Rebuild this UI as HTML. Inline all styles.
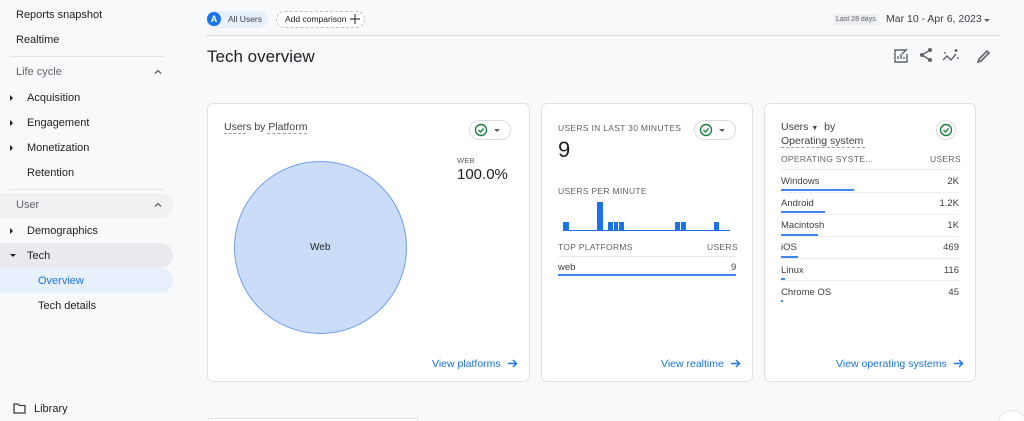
<!DOCTYPE html>
<html><head><meta charset="utf-8"><style>
*{margin:0;padding:0;box-sizing:border-box}
html,body{width:1024px;height:421px;overflow:hidden}
body{background:#f8f9fb;font-family:"Liberation Sans",Arial,sans-serif;color:#202124;position:relative}
.a{position:absolute;white-space:nowrap}
.nav{font-size:11px;color:#202124}
.sec{font-size:11px;color:#5f6368}
.card{position:absolute;background:#fff;border:1px solid #dfe1e5;border-radius:6px}
.cap{font-size:8.5px;letter-spacing:.3px;color:#5f6368}
.link{font-size:10.5px;color:#1a73e8}
.chip{position:absolute;border:1px solid #dadce0;border-radius:12px;background:#fff}
.row{position:absolute;left:16px;width:178px;font-size:9.5px;color:#3c4043}
.row span{position:absolute;right:0}
</style></head><body>
<!-- sidebar -->
<div class="a nav" style="left:16px;top:9px">Reports snapshot</div>
<div class="a nav" style="left:16px;top:34px">Realtime</div>
<div class="a" style="left:10px;top:56px;width:154px;height:1px;background:#e3e3e3"></div>
<div class="a sec" style="left:16px;top:66px">Life cycle</div>
<svg class="a" style="left:154px;top:69px" width="8" height="5" viewBox="0 0 8 5"><path d="M1 4.5L4 1.5 7 4.5" fill="none" stroke="#5f6368" stroke-width="1.3"/></svg>
<div class="a" style="left:10px;top:95px;border-top:3px solid transparent;border-bottom:3px solid transparent;border-left:3px solid #202124"></div>
<div class="a nav" style="left:27px;top:92px">Acquisition</div>
<div class="a" style="left:10px;top:120px;border-top:3px solid transparent;border-bottom:3px solid transparent;border-left:3px solid #202124"></div>
<div class="a nav" style="left:27px;top:117px">Engagement</div>
<div class="a" style="left:10px;top:145px;border-top:3px solid transparent;border-bottom:3px solid transparent;border-left:3px solid #202124"></div>
<div class="a nav" style="left:27px;top:142px">Monetization</div>
<div class="a nav" style="left:27px;top:167px">Retention</div>
<div class="a" style="left:10px;top:189px;width:154px;height:1px;background:#e3e3e3"></div>
<div class="a" style="left:0;top:193px;width:173px;height:25px;background:#f0f1f3;border-radius:0 13px 13px 0"></div>
<div class="a sec" style="left:16px;top:199px">User</div>
<svg class="a" style="left:154px;top:202px" width="8" height="5" viewBox="0 0 8 5"><path d="M1 4.5L4 1.5 7 4.5" fill="none" stroke="#5f6368" stroke-width="1.3"/></svg>
<div class="a" style="left:10px;top:228px;border-top:3px solid transparent;border-bottom:3px solid transparent;border-left:3px solid #202124"></div>
<div class="a nav" style="left:27px;top:225px">Demographics</div>
<div class="a" style="left:0;top:243px;width:173px;height:25px;background:#e8eaed;border-radius:0 13px 13px 0"></div>
<div class="a" style="left:10px;top:254px;width:0;height:0;border-left:3px solid transparent;border-right:3px solid transparent;border-top:3px solid #202124"></div>
<div class="a nav" style="left:27px;top:250px">Tech</div>
<div class="a" style="left:0;top:268px;width:173px;height:25px;background:#e8f0fe;border-radius:0 13px 13px 0"></div>
<div class="a nav" style="left:38px;top:275px;color:#1a73e8">Overview</div>
<div class="a nav" style="left:38px;top:300px">Tech details</div>
<svg class="a" style="left:13px;top:403px" width="13" height="11" viewBox="0 0 13 11"><path d="M1 1h4l1.5 1.5H12v7.5H1z" fill="none" stroke="#3c4043" stroke-width="1.3"/></svg>
<div class="a nav" style="left:34px;top:403px">Library</div>
<!-- top bar -->
<div class="a" style="left:206px;top:11px;width:62px;height:17px;background:#e8f0fe;border-radius:9px"></div>
<div class="a" style="left:207px;top:12px;width:14px;height:14px;border-radius:7px;background:#1a73e8;color:#fff;font-size:9px;text-align:center;line-height:14px;font-weight:bold">A</div>
<div class="a" style="left:228px;top:14px;font-size:8.5px;color:#3c4043">All Users</div>
<div class="a" style="left:276px;top:11px;width:89px;height:17px;border:1px dashed #bdc1c6;border-radius:9px;background:#fff"></div>
<div class="a" style="left:285px;top:14px;font-size:8.5px;color:#202124">Add comparison</div>
<svg class="a" style="left:350px;top:14px" width="10" height="10" viewBox="0 0 10 10"><path d="M5 0v10M0 5h10" stroke="#3c4043" stroke-width="1.2"/></svg>
<div class="a" style="left:206px;top:35px;width:794px;height:1px;background:#dadce0"></div>
<div class="a" style="left:834px;top:14px;font-size:7px;color:#5f6368;background:#eceef0;padding:2px 2px">Last 28 days</div>
<div class="a" style="left:886px;top:13px;font-size:10.5px;color:#3c4043">Mar 10 - Apr 6, 2023</div>
<div class="a" style="left:984px;top:19px;border-left:3px solid transparent;border-right:3px solid transparent;border-top:3px solid #5f6368"></div>
<div class="a" style="left:207px;top:47px;font-size:17px;color:#202124">Tech overview</div>
<svg class="a" style="left:893px;top:48px" width="16" height="16" viewBox="0 0 16 16" fill="none" stroke="#5f6368" stroke-width="1.4"><path d="M12 2H2v12h12V6"/><path d="M5 11V8M8 11V6M11 11V9"/><path d="M9 6l5-5"/></svg>
<svg class="a" style="left:918px;top:47px" width="16" height="16" viewBox="0 0 16 16"><g fill="none" stroke="#5f6368" stroke-width="1.4"><path d="M12 3L4 8l8 5"/></g><circle cx="12" cy="3" r="2" fill="#5f6368"/><circle cx="4" cy="8" r="2" fill="#5f6368"/><circle cx="12" cy="13" r="2" fill="#5f6368"/></svg>
<svg class="a" style="left:942px;top:48px" width="18" height="16" viewBox="0 0 18 16" fill="none" stroke="#5f6368" stroke-width="1.4"><path d="M1 12l4-4 4 4 5-6"/><path d="M14 1v3M12.5 2.5h3M3 4v2M16 9v2"/></svg>
<svg class="a" style="left:976px;top:48px" width="14" height="16" viewBox="0 0 14 16" fill="none" stroke="#5f6368" stroke-width="1.6"><path d="M2 14l1-3 8-8 2 2-8 8z"/></svg>
<!-- card 1 -->
<div class="card" style="left:207px;top:103px;width:323px;height:279px"></div>
<div class="a" style="left:224px;top:121px;font-size:10.5px;color:#3c4043">Users by Platform</div>
<div class="a" style="left:224px;top:133px;width:22px;border-top:1px dashed #9aa0a6"></div>
<div class="a" style="left:267px;top:133px;width:40px;border-top:1px dashed #9aa0a6"></div>
<div class="chip" style="left:469px;top:120px;width:42px;height:20px"></div>
<svg class="a" style="left:474px;top:123px" width="14" height="14" viewBox="0 0 14 14"><circle cx="7" cy="7" r="5.5" fill="none" stroke="#188038" stroke-width="1.4"/><path d="M4.5 7l2 2 3-3.5" fill="none" stroke="#188038" stroke-width="1.4"/></svg>
<div class="a" style="left:494px;top:129px;border-left:3px solid transparent;border-right:3px solid transparent;border-top:3px solid #5f6368"></div>
<div class="a cap" style="left:457px;top:156px;font-size:7.5px">WEB</div>
<div class="a" style="left:457px;top:166px;font-size:15px;color:#202124">100.0%</div>
<div class="a" style="left:234px;top:161px;width:173px;height:173px;border-radius:50%;background:#cbdcfa;border:1px solid #6b9ef0"></div>
<div class="a" style="left:310px;top:242px;font-size:10px;color:#202124">Web</div>
<div class="a link" style="left:432px;top:358px">View platforms</div>
<svg class="a" style="left:507px;top:358px" width="11" height="11" viewBox="0 0 11 11" fill="none" stroke="#1a73e8" stroke-width="1.4"><path d="M1 5.5h8.5M6 2l3.5 3.5L6 9"/></svg>
<!-- card 2 -->
<div class="card" style="left:541px;top:103px;width:212px;height:279px"></div>
<div class="a cap" style="left:558px;top:123px">USERS IN LAST 30 MINUTES</div>
<div class="a" style="left:558px;top:137px;font-size:22px;color:#202124">9</div>
<div class="chip" style="left:694px;top:120px;width:42px;height:20px"></div>
<svg class="a" style="left:699px;top:123px" width="14" height="14" viewBox="0 0 14 14"><circle cx="7" cy="7" r="5.5" fill="none" stroke="#188038" stroke-width="1.4"/><path d="M4.5 7l2 2 3-3.5" fill="none" stroke="#188038" stroke-width="1.4"/></svg>
<div class="a" style="left:719px;top:129px;border-left:3px solid transparent;border-right:3px solid transparent;border-top:3px solid #5f6368"></div>
<div class="a cap" style="left:558px;top:186px">USERS PER MINUTE</div>
<div class="a" style="left:563px;top:230px;width:167px;height:1px;background:#1a73e8"></div>
<div class="a" style="left:563px;top:222px;width:6px;height:9px;background:#1a73e8"></div>
<div class="a" style="left:597px;top:202px;width:6px;height:29px;background:#1a73e8"></div>
<div class="a" style="left:608px;top:222px;width:5px;height:9px;background:#1a73e8"></div>
<div class="a" style="left:614px;top:222px;width:4px;height:9px;background:#1a73e8"></div>
<div class="a" style="left:619px;top:222px;width:5px;height:9px;background:#1a73e8"></div>
<div class="a" style="left:675px;top:222px;width:5px;height:9px;background:#1a73e8"></div>
<div class="a" style="left:681px;top:222px;width:5px;height:9px;background:#1a73e8"></div>
<div class="a" style="left:714px;top:222px;width:5px;height:9px;background:#1a73e8"></div>
<div class="a cap" style="left:558px;top:242px">TOP PLATFORMS</div>
<div class="a cap" style="left:707px;top:242px">USERS</div>
<div class="a" style="left:558px;top:256px;width:178px;height:1px;background:#e8eaed"></div>
<div class="a" style="left:558px;top:262px;font-size:9.5px;color:#3c4043">web</div>
<div class="a" style="left:731px;top:262px;font-size:9.5px;color:#3c4043">9</div>
<div class="a" style="left:558px;top:274px;width:178px;height:2px;background:#4285f4"></div>
<div class="a link" style="left:661px;top:358px">View realtime</div>
<svg class="a" style="left:730px;top:358px" width="11" height="11" viewBox="0 0 11 11" fill="none" stroke="#1a73e8" stroke-width="1.4"><path d="M1 5.5h8.5M6 2l3.5 3.5L6 9"/></svg>
<!-- card 3 -->
<div class="card" style="left:764px;top:103px;width:212px;height:279px"></div>
<div class="a" style="left:781px;top:121px;font-size:10.5px;color:#3c4043">Users <span style="font-size:7px">&#9660;</span>&nbsp; by</div>
<div class="a" style="left:781px;top:135px;font-size:10.5px;color:#3c4043">Operating system</div>
<div class="a" style="left:781px;top:147px;width:84px;border-top:1px dashed #9aa0a6"></div>
<div class="chip" style="left:936px;top:120px;width:20px;height:20px"></div>
<svg class="a" style="left:939px;top:123px" width="14" height="14" viewBox="0 0 14 14"><circle cx="7" cy="7" r="5.5" fill="none" stroke="#188038" stroke-width="1.4"/><path d="M4.5 7l2 2 3-3.5" fill="none" stroke="#188038" stroke-width="1.4"/></svg>
<div class="a cap" style="left:781px;top:154px">OPERATING SYSTE...</div>
<div class="a cap" style="left:930px;top:154px">USERS</div>
<div class="a" style="left:781px;top:169px;width:178px;height:1px;background:#e8eaed"></div>
<div class="row" style="left:781px;top:176px">Windows<span>2K</span></div>
<div class="a" style="left:781px;top:189px;width:73px;height:2px;background:#4285f4"></div>
<div class="a" style="left:781px;top:192px;width:178px;height:1px;background:#eee"></div>
<div class="row" style="left:781px;top:198px">Android<span>1.2K</span></div>
<div class="a" style="left:781px;top:211px;width:44px;height:2px;background:#4285f4"></div>
<div class="a" style="left:781px;top:214px;width:178px;height:1px;background:#eee"></div>
<div class="row" style="left:781px;top:220px">Macintosh<span>1K</span></div>
<div class="a" style="left:781px;top:234px;width:37px;height:2px;background:#4285f4"></div>
<div class="a" style="left:781px;top:236px;width:178px;height:1px;background:#eee"></div>
<div class="row" style="left:781px;top:242px">iOS<span>469</span></div>
<div class="a" style="left:781px;top:256px;width:17px;height:2px;background:#4285f4"></div>
<div class="a" style="left:781px;top:258px;width:178px;height:1px;background:#eee"></div>
<div class="row" style="left:781px;top:265px">Linux<span>116</span></div>
<div class="a" style="left:781px;top:278px;width:4px;height:2px;background:#4285f4"></div>
<div class="a" style="left:781px;top:280px;width:178px;height:1px;background:#eee"></div>
<div class="row" style="left:781px;top:287px">Chrome OS<span>45</span></div>
<div class="a" style="left:781px;top:300px;width:2px;height:2px;background:#4285f4"></div>
<div class="a link" style="left:836px;top:358px">View operating systems</div>
<svg class="a" style="left:953px;top:358px" width="11" height="11" viewBox="0 0 11 11" fill="none" stroke="#1a73e8" stroke-width="1.4"><path d="M1 5.5h8.5M6 2l3.5 3.5L6 9"/></svg>
<!-- bottom partial cards -->
<div class="a" style="left:208px;top:418px;width:210px;height:6px;background:#fff;border:1px solid #e3e3e3"></div>
<div class="a" style="left:997px;top:410px;width:30px;height:30px;border-radius:50%;background:#fff;border:1px solid #e3e3e3"></div>
</body></html>
